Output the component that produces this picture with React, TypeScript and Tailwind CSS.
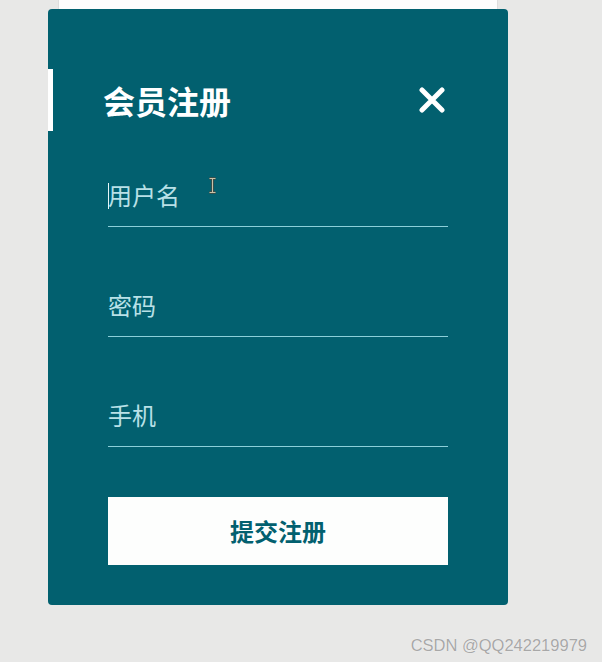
import React from "react";

function Field({ placeholder, first }: { placeholder: string; first?: boolean }) {
  return (
    <div className="relative w-[340px]">
      <input
        type="text"
        placeholder={placeholder}
        className="block h-[60px] w-full border-b border-[#8ccfd9] bg-transparent p-0 pb-[4px] text-[24px] text-white outline-none placeholder:text-[#b9e1e7] font-['Noto_Sans_CJK_SC',sans-serif]"
      />
      {first && (
        <>
          <span className="pointer-events-none absolute left-0 top-[16px] h-[26px] w-px bg-[#e6f6f8]" />
          <svg
            className="pointer-events-none absolute left-[100px] top-[10px]"
            width="9"
            height="17"
            viewBox="0 0 9 17"
          >
            <path d="M1.5 1.5h6M4.5 1.5v14M1.5 15.5h6" stroke="#4a4a40" strokeWidth="2.4" fill="none" />
            <path d="M1.5 1.5h6M4.5 1.5v14M1.5 15.5h6" stroke="#c9c2a8" strokeWidth="1" fill="none" />
          </svg>
        </>
      )}
    </div>
  );
}

export default function App() {
  return (
    <div className="relative h-[662px] w-[602px] overflow-hidden bg-[#e8e8e7] font-['Noto_Sans_CJK_SC',sans-serif]">
      <div className="ml-[58px] h-[9px] w-[440px] border-x border-[#dedede] bg-[#fdfdfd]" />
      <div className="ml-[48px] flex h-[596px] w-[460px] flex-col rounded-[4px] bg-[#02606f] pt-[60px]">
        <div className="flex h-[62px] items-center">
          <div className="h-full w-[5px] bg-white" />
          <h2 className="ml-[50px] text-[32px] font-bold leading-none text-white">会员注册</h2>
          <button className="ml-auto mr-[63px] flex h-[26px] w-[26px] items-center justify-center" aria-label="close">
            <svg width="26" height="26" viewBox="0 0 26 26">
              <path d="M3 3L23 23M23 3L3 23" stroke="#ffffff" strokeWidth="5" strokeLinecap="round" fill="none" />
            </svg>
          </button>
        </div>
        <div className="mt-[36px] flex flex-col gap-[50px] pl-[60px]">
          <Field placeholder="用户名" first />
          <Field placeholder="密码" />
          <Field placeholder="手机" />
          <button className="h-[68px] w-[340px] bg-[#fdfefd] text-[24px] font-bold text-[#02606f]">
            提交注册
          </button>
        </div>
      </div>
      <div className="absolute right-[15px] top-[633px] text-[16.5px] text-[#a8a8a8] font-['Liberation_Sans',sans-serif] [text-shadow:0_0_1px_#ffffff]">
        CSDN @QQ242219979
      </div>
    </div>
  );
}
